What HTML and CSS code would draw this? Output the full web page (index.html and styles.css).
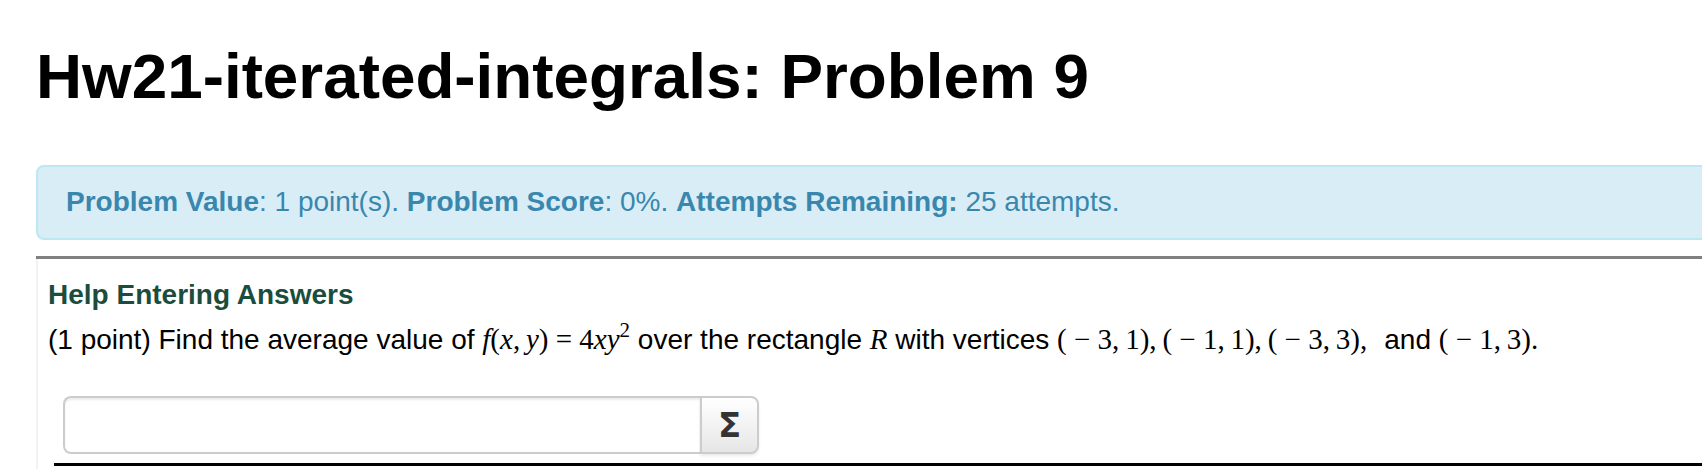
FILE: index.html
```html
<!DOCTYPE html>
<html lang="en">
<head>
<meta charset="utf-8">
<title>Hw21-iterated-integrals: Problem 9</title>
<link rel="stylesheet" href="styles.css">
</head>
<body>
<div class="page">
  <h2 class="title">Hw21-iterated-integrals: Problem 9</h2>
  <div class="alert-info">
    <b>Problem Value</b>: 1 point(s). <b>Problem Score</b>: 0%. <b>Attempts Remaining:</b> 25 attempts.
  </div>
  <hr class="rule">
  <div class="problem">
    <div class="help">Help Entering Answers</div>
    <div class="statement">(1 point) Find the average value of <span class="math"><i>f</i>(<i>x</i>,&#8201;<i>y</i>)&#8197;=&#8197;4<i>x</i><i>y</i><sup>2</sup></span> over the rectangle <span class="math"><i>R</i></span> with vertices <span class="math">(&#8197;&#8722;&#8197;3,&#8201;1),&#8201;(&#8197;&#8722;&#8197;1,&#8201;1),&#8201;(&#8197;&#8722;&#8197;3,&#8201;3),</span>&#8196; and <span class="math">(&#8197;&#8722;&#8197;1,&#8201;3).</span></div>
    <div class="answer">
      <input class="answer-input" type="text" aria-label="answer">
      <button class="sigma" type="button">&#931;</button>
    </div>
    <div class="bottom-rule"></div>
  </div>
</div>
</body>
</html>
```
FILE: styles.css
```css
html, body {
  margin: 0;
  padding: 0;
  background: #ffffff;
  overflow: hidden;
}
body {
  font-family: "Liberation Sans", Arial, Helvetica, sans-serif;
  color: #000;
  width: 1702px;
  height: 469px;
}
.page {
  padding-left: 36px;
  width: 1720px;
}
.title {
  margin: 36px 0 0 0;
  font-size: 63.8px;
  line-height: 80px;
  font-weight: bold;
  color: #000;
  letter-spacing: 0;
}
.alert-info {
  margin-top: 49px;
  background: #d9edf7;
  border: 2px solid #bce8f1;
  border-radius: 8px;
  color: #3a87ad;
  font-size: 28px;
  line-height: 40px;
  padding: 15px 70px 16px 28px;
}
.alert-info b {
  font-weight: bold;
}
.rule {
  margin: 16px 0 0 0;
  border: 0;
  border-top: 3px solid #808080;
  height: 0;
}
.problem {
  border-left: 2px solid #f2f2f2;
  padding: 17px 0 10px 10px;
}
.help {
  font-size: 28px;
  font-weight: bold;
  color: #1b4d3e;
  line-height: 37px;
}
.statement {
  margin-top: 8px;
  font-size: 28px;
  line-height: 37px;
  color: #000;
}
.math {
  font-family: "Liberation Serif", "Times New Roman", serif;
  font-size: 29px;
}
.math i {
  font-style: italic;
}
.math sup {
  font-size: 21px;
  line-height: 0;
  vertical-align: 0.55em;
}
.answer {
  display: flex;
  margin: 38px 0 0 15px;
  height: 58px;
}
.answer-input {
  box-sizing: border-box;
  width: 637px;
  height: 58px;
  margin: 0;
  border: 2px solid #cccccc;
  border-right: 0;
  border-radius: 8px 0 0 8px;
  box-shadow: inset 0 2px 2px rgba(0, 0, 0, 0.075);
  background: #fff;
  padding: 0 12px;
  font-size: 28px;
  outline: none;
}
.sigma {
  box-sizing: border-box;
  width: 59px;
  height: 58px;
  margin: 0;
  border: 2px solid #cccccc;
  border-radius: 0 8px 8px 0;
  background: linear-gradient(#ffffff, #e6e6e6);
  box-shadow: 0 2px 3px rgba(0, 0, 0, 0.08);
  color: #333;
  font-family: "DejaVu Sans", "Liberation Sans", sans-serif;
  font-size: 34px;
  font-weight: bold;
  padding: 0;
  line-height: 54px;
}
.bottom-rule {
  margin: 9px 0 0 6px;
  height: 0;
  border-top: 3px solid #000;
}
```
